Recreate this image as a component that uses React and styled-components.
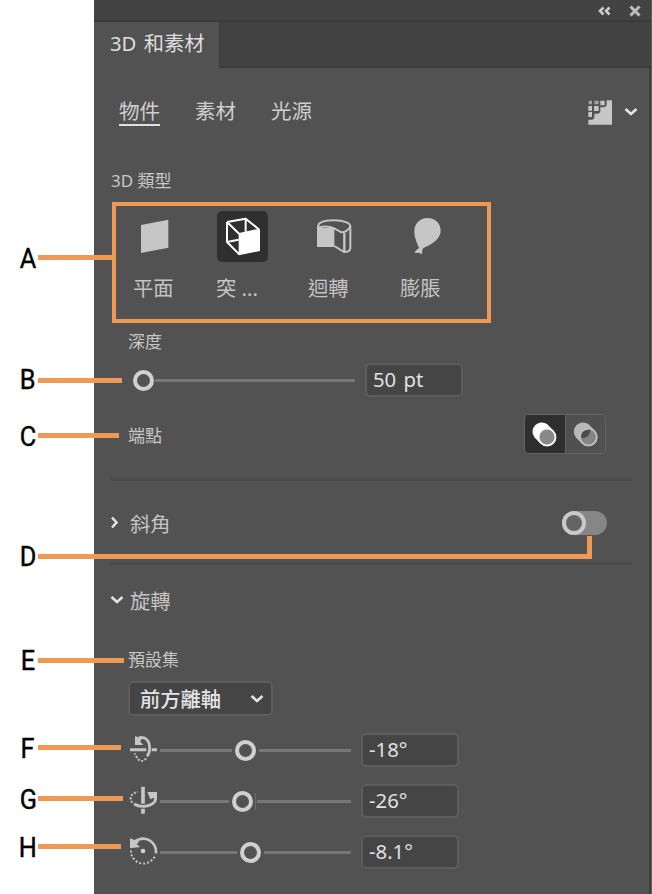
import React from "react";
import styled, { createGlobalStyle } from "styled-components";

const GlobalStyle = createGlobalStyle`
  * {
    box-sizing: border-box;
  }

  body {
    margin: 0;
    background: #ffffff;
    font-family: "Noto Sans", "Noto Sans CJK TC", sans-serif;
  }

  svg {
    display: block;
    flex: none;
  }
`;

const Page = styled.div`
  position: relative;
  width: 652px;
  height: 894px;
  padding-left: 94px;
  overflow: hidden;
`;

const Panel = styled.div`
  height: 894px;
  background: #525252;
  border-right: 1px solid #5c5c5c;
  box-shadow: inset -2px 0 0 #3e3e3e;
  color: #cfcfcf;
`;

const TitleBar = styled.div`
  display: flex;
  justify-content: flex-end;
  align-items: center;
  gap: 18px;
  height: 22px;
  padding: 2px 10px 0 0;
  background: #434343;
  border-bottom: 2px solid #3a3a3a;
`;

const TabBar = styled.div`
  display: flex;
  height: 46px;
  background: #424242;
`;

const PanelTab = styled.div`
  width: 125px;
  padding-left: 16px;
  background: #525252;
  font-size: 20.3px;
  line-height: 43px;
  word-spacing: 2px;
  white-space: nowrap;
  color: #dedede;
`;

const TabRest = styled.div`
  flex: 1;
  border-left: 1px solid #3a3a3a;
  border-bottom: 2px solid #3a3a3a;
`;

const ModeRow = styled.div`
  display: flex;
  align-items: center;
  gap: 35px;
  height: 42px;
  margin-top: 23px;
  padding: 0 13px 0 25px;
`;

const Mode = styled.span`
  height: 28px;
  font-size: 20.5px;
  line-height: 26px;
  border-bottom: 2px solid ${(props) => (props.$active ? "#e0e0e0" : "transparent")};
`;

const ModeTools = styled.div`
  display: flex;
  align-items: center;
  gap: 12px;
  margin-left: auto;
`;

const Label = styled.div`
  height: 24px;
  margin-top: ${(props) => props.$top || 0}px;
  padding-left: ${(props) => props.$indent || 34}px;
  font-size: 17px;
  line-height: 24px;
  color: #c8c8c8;
`;

const TypeGrid = styled.div`
  display: grid;
  grid-template-columns: 89px 92px 92px 92px;
  height: 101px;
  margin-top: 18px;
  padding-left: 34px;
`;

const TypeTile = styled.div`
  display: flex;
  flex-direction: column;
  align-items: flex-start;
`;

const TypeIcon = styled.div`
  width: 51px;
  height: 51px;
  border-radius: 5px;
  background: ${(props) => (props.$active ? "#2f2f2f" : "transparent")};
`;

const TypeName = styled.span`
  margin-top: 11px;
  margin-left: ${(props) => (props.$first ? 5 : -1)}px;
  font-size: 20.3px;
  line-height: 30px;
  color: #c4c4c4;
`;

const DepthRow = styled.div`
  display: flex;
  align-items: center;
  height: 34px;
  margin-top: 9px;
  padding-left: 38px;
`;

const SliderBox = styled.div`
  display: flex;
  align-items: center;
  width: ${(props) => props.$width}px;
`;

const Track = styled.div`
  height: 3px;
  width: ${(props) => (props.$width ? `${props.$width}px` : "auto")};
  flex: ${(props) => (props.$width ? "none" : 1)};
  background: #777777;
`;

const Knob = styled.div`
  width: 21px;
  height: 21px;
  margin: 0 ${(props) => props.$gap || 3}px;
  border: 4px solid #d0d0d0;
  border-radius: 50%;
`;

const Tick = styled.div`
  width: 1px;
  height: 17px;
  margin: 0 1px 0 -1px;
  background: #6c6c6c;
`;

const Field = styled.div`
  width: 98px;
  height: 34px;
  margin-left: 10px;
  padding-left: 6px;
  border: 2px solid #5d5d5d;
  border-radius: 5px;
  background: #454545;
  font-size: 20.3px;
  line-height: 29px;
  word-spacing: 2px;
  color: #e0e0e0;
`;

const CapRow = styled.div`
  display: flex;
  align-items: center;
  justify-content: space-between;
  height: 40px;
  margin-top: 17px;
  padding-right: 45px;
`;

const Segmented = styled.div`
  display: flex;
  width: 82px;
  height: 40px;
  border: 1px solid #646464;
  border-radius: 5px;
  overflow: hidden;
`;

const Segment = styled.div`
  width: 40px;
  height: 38px;
  background: ${(props) => (props.$active ? "#2e2e2e" : "#505050")};

  & + & {
    border-left: 1px solid #646464;
  }
`;

const Divider = styled.div`
  height: 3px;
  margin: ${(props) => props.$top}px 19px 0 17px;
  background: #4a4a4a;
`;

const SectionRow = styled.div`
  display: flex;
  align-items: center;
  height: 30px;
  margin-top: ${(props) => props.$top}px;
  padding: 0 44px 0 16px;
  font-size: 20.3px;
  line-height: 30px;
  color: #c4c4c4;

  span {
    margin-left: 6px;
    padding-top: 2px;
  }
`;

const Toggle = styled.div`
  width: 45px;
  height: 24px;
  margin-left: auto;
  border-radius: 12px;
  background: #868686;
`;

const ToggleKnob = styled.div`
  width: 24px;
  height: 24px;
  border: 4px solid #c9c9c9;
  border-radius: 50%;
  background: #646464;
`;

const Select = styled.div`
  display: flex;
  align-items: center;
  justify-content: space-between;
  width: 145px;
  height: 35px;
  margin: 9px 0 0 34px;
  padding: 0 7px 0 10px;
  border: 2px solid #5d5d5d;
  border-radius: 5px;
  background: #454545;
  font-size: 20.3px;
  font-weight: 500;
  line-height: 30px;
  color: #e4e4e4;
`;

const RotateList = styled.div`
  display: flex;
  flex-direction: column;
  gap: 17px;
  margin-top: 17px;
  padding-left: 34px;
`;

const RotateRow = styled.div`
  display: flex;
  align-items: center;
  height: 34px;

  > svg {
    margin: -2px 2px 0 0;
  }
`;

// lettered call-outs lie over the panel
const Callout = styled.div`
  position: absolute;
  left: 0;
  top: ${(props) => props.$top}px;
  display: flex;
  align-items: center;
  height: 5px;
`;

const Letter = styled.span`
  flex: none;
  display: flex;
  justify-content: center;
  width: 38px;
  padding-left: 18px;
  font-family: Roboto, "Liberation Sans", sans-serif;
  font-size: 27.5px;
  font-weight: 400;
  line-height: 30px;
  color: #000000;
  -webkit-text-stroke: 0.4px #000000;

  span {
    transform: translateY(${(props) => props.$shift || 0}px) scaleX(0.92);
  }
`;

const Leader = styled.span`
  width: ${(props) => props.$width}px;
  height: 5px;
  background: #ee9a55;
`;

const Riser = styled.span`
  width: 5px;
  height: 23px;
  margin-left: -5px;
  align-self: flex-end;
  background: #ee9a55;
`;

const TypeFrame = styled.div`
  position: absolute;
  left: 112px;
  top: 202px;
  width: 379px;
  height: 121px;
  border: 4px solid #ee9a55;
`;

const Chevron = ({ right }) => (
  <svg width="14" height="14" viewBox="0 0 14 14" fill="none" stroke="#e4e4e4" strokeWidth="2.6">
    <path d={right ? "M2 1.5L6.5 6.5L2 11.5" : "M1.5 4L7 9L12.5 4"} />
  </svg>
);

const PlaneIcon = () => (
  <svg width="51" height="51" viewBox="84 48 153 153">
    <path d="M123 90L205 74V158L123 174Z" fill="#c6c6c6" />
  </svg>
);

const ExtrudeIcon = () => (
  <svg width="51" height="51" viewBox="351 48 153 153">
    <g fill="none" stroke="#fff" strokeWidth="6" strokeLinejoin="round">
      <path d="M381 81L437 71V110M381 81V141L416 134" />
      <path d="M381 81L418 117M437 71L478 104M381 141L418 178" />
      <path d="M418 117L478 104" />
    </g>
    <path d="M416 117L480 104V168L416 181Z" fill="#fff" />
  </svg>
);

const RevolveIcon = () => (
  <svg width="51" height="51" viewBox="27 48 153 153">
    <path d="M51 99H103V156H51Z" fill="#c6c6c6" />
    <g fill="none" stroke="#c6c6c6" strokeWidth="6" strokeLinejoin="round">
      <path d="M54 100V94C56 82 75 76 102 76C132 76 151 84 151 94V160C150 167 143 171 132 171L103 153" />
      <path d="M54 98C75 91 92 95 103 100L122 111C130 114 148 106 151 94" />
      <path d="M133 114V170" strokeWidth="7" />
    </g>
  </svg>
);

const InflateIcon = () => (
  <svg width="51" height="51" viewBox="303 48 153 153">
    <path
      d="M382 69C407 69 422 87 422 107C422 134 390 150 370 159L367 165L366 178L357 173L345 174L346 168L357 159C352 145 343 130 343 109C343 86 360 69 382 69Z"
      fill="#c6c6c6"
    />
  </svg>
);

const CapOnIcon = () => (
  <svg width="40" height="38" viewBox="555 196 120 114">
    <path d="M583 263A28 28 0 0 1 621 223L641 243A27 27 0 0 1 602 282Z" fill="#fff" />
    <circle cx="621" cy="262" r="25" fill="#888" stroke="#f4f4f4" strokeWidth="5" />
  </svg>
);

const CapOffIcon = () => (
  <svg width="40" height="38" viewBox="681 196 120 114">
    <path d="M710 263A28 28 0 0 1 748 223L768 243A27 27 0 0 1 729 282Z" fill="#b8b8b8" />
    <circle cx="748" cy="262" r="25" fill="#858585" stroke="#bebebe" strokeWidth="5" />
    <path d="M727 265C724 247 737 239 754 240C754 256 742 267 727 265Z" fill="#4c4c4c" />
  </svg>
);

const RenderIcon = () => (
  <svg width="24" height="25" viewBox="322 302 72 75" fill="#c6c6c6">
    <path d="M378 303H394V376H323V361H333Q341 360 341 352V343H350Q359 342 359 334V324H368Q378 323 378 315Z" />
    <path d="M323 320h11v14h-11zM323 338h11v15h-11zM340 320h14v15h-14zM359 304h13v14h-13z" />
    <path d="M324 304h10v11h-10zM341 304h13v11h-13z" fill="#a2a2a2" />
  </svg>
);

const RotateXIcon = () => (
  <svg width="30" height="30" viewBox="384 25 90 90" fill="none" stroke="#c6c6c6">
    <path d="M390 72H439M455 72H471" strokeWidth="9" />
    <path d="M417 36C439 32 449 47 449 67C449 79 446 86 441 92" strokeWidth="8" />
    <path d="M405 31V58H430L420 47L427 39Z" fill="#c6c6c6" stroke="none" />
    <path d="M438 98C429 109 417 110 408 91L404 83" strokeWidth="6" strokeDasharray="6 5" />
  </svg>
);

const RotateYIcon = () => (
  <svg width="30" height="30" viewBox="384 178 90 90" fill="none" stroke="#c6c6c6">
    <path d="M429 183V234M429 249V264" strokeWidth="11" />
    <path d="M463 211C476 230 449 243 427 242C417 242 409 239 402 235" strokeWidth="8" />
    <path d="M442 199H471V224L461 216L451 221Z" fill="#c6c6c6" stroke="none" />
    <path d="M397 231C386 217 394 202 414 199" strokeWidth="6" strokeDasharray="6 5" />
  </svg>
);

const RotateZIcon = () => (
  <svg width="30" height="30" viewBox="384 331 90 90" fill="none" stroke="#c6c6c6">
    <path d="M403 349C432 326 470 346 468 383" strokeWidth="8" />
    <path d="M390 338V368L421 364L410 356L418 348Z" fill="#c6c6c6" stroke="none" />
    <path d="M464 393C449 420 407 424 393 384V374" strokeWidth="6" strokeDasharray="6 6" />
    <circle cx="429" cy="376" r="7" fill="#d0d0d0" stroke="none" />
  </svg>
);

const types = [
  { name: "平面", icon: <PlaneIcon /> },
  { name: "突 ...", icon: <ExtrudeIcon />, active: true },
  { name: "迴轉", icon: <RevolveIcon /> },
  { name: "膨脹", icon: <InflateIcon /> },
];

const rotations = [
  { value: "-18°", icon: <RotateXIcon />, before: 72 },
  { value: "-26°", icon: <RotateYIcon />, before: 69, tick: true },
  { value: "-8.1°", icon: <RotateZIcon />, before: 77 },
];

const callouts = [
  { letter: "A", top: 255, width: 76, shift: 1 },
  { letter: "B", top: 378, width: 84, shift: -1 },
  { letter: "C", top: 433, width: 81, shift: 1 },
  { letter: "D", top: 554, width: 554, riser: true },
  { letter: "E", top: 658, width: 86 },
  { letter: "F", top: 745, width: 83, shift: 1 },
  { letter: "G", top: 796, width: 85, shift: 1 },
  { letter: "H", top: 844, width: 83, shift: 1 },
];

const App = () => {
  return (
    <Page>
      <GlobalStyle />
      <Panel>
        <TitleBar>
          <svg width="13" height="10" viewBox="0 0 13 10" fill="none" stroke="#cccccc" strokeWidth="2.6">
            <path d="M5.5 1.5L2 5L5.5 8.5M11.5 1.5L8 5L11.5 8.5" />
          </svg>
          <svg width="12" height="12" viewBox="0 0 12 12" fill="none" stroke="#bdbdbd" strokeWidth="3">
            <path d="M1.5 1.5L10.5 10.5M10.5 1.5L1.5 10.5" />
          </svg>
        </TitleBar>
        <TabBar>
          <PanelTab>3D 和素材</PanelTab>
          <TabRest />
        </TabBar>

        <ModeRow>
          <Mode $active>物件</Mode>
          <Mode>素材</Mode>
          <Mode>光源</Mode>
          <ModeTools>
            <RenderIcon />
            <Chevron />
          </ModeTools>
        </ModeRow>

        <Label $top={36} $indent={17}>3D 類型</Label>
        <TypeGrid>
          {types.map((type, index) => (
            <TypeTile key={type.name}>
              <TypeIcon $active={type.active}>{type.icon}</TypeIcon>
              <TypeName $first={index === 0}>{type.name}</TypeName>
            </TypeTile>
          ))}
        </TypeGrid>

        <Label $top={18}>深度</Label>
        <DepthRow>
          <SliderBox $width={223}>
            <Knob $gap={1} />
            <Track />
          </SliderBox>
          <Field>50 pt</Field>
        </DepthRow>

        <CapRow>
          <Label $top={3}>端點</Label>
          <Segmented>
            <Segment $active>
              <CapOnIcon />
            </Segment>
            <Segment>
              <CapOffIcon />
            </Segment>
          </Segmented>
        </CapRow>

        <Divider $top={24} />
        <SectionRow $top={27}>
          <Chevron right />
          <span>斜角</span>
          <Toggle>
            <ToggleKnob />
          </Toggle>
        </SectionRow>
        <Divider $top={24} />
        <SectionRow $top={20}>
          <Chevron />
          <span>旋轉</span>
        </SectionRow>

        <Label $top={33}>預設集</Label>
        <Select>
          前方離軸
          <Chevron />
        </Select>

        <RotateList>
          {rotations.map((item) => (
            <RotateRow key={item.value}>
              {item.icon}
              <SliderBox $width={191}>
                <Track $width={item.before} />
                <Knob />
                {item.tick && <Tick />}
                <Track />
              </SliderBox>
              <Field>{item.value}</Field>
            </RotateRow>
          ))}
        </RotateList>
      </Panel>

      <TypeFrame />
      {callouts.map((item) => (
        <Callout key={item.letter} $top={item.top}>
          <Letter $shift={item.shift}>
            <span>{item.letter}</span>
          </Letter>
          <Leader $width={item.width} />
          {item.riser && <Riser />}
        </Callout>
      ))}
    </Page>
  );
};

export default App;
